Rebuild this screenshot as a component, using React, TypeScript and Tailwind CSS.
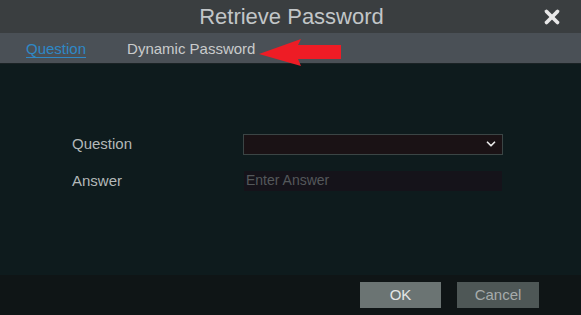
import { X, ChevronDown } from 'lucide-react'

export default function App() {
  return (
    <div
      className="flex h-[315px] w-[581px] flex-col overflow-hidden bg-[#0e1b1d]"
      style={{ fontFamily: '"Liberation Sans", Arial, sans-serif' }}
    >
      <div className="relative flex h-[33px] items-center justify-center bg-[#3a3e40]">
        <span className="pl-[2px] text-[22px] text-[#c2c6c8]">Retrieve Password</span>
        <X className="absolute right-[18px] top-[6px] h-[22px] w-[22px] text-[#e8e8e8]" strokeWidth={4} />
      </div>

      <div className="relative flex h-[31px] items-center gap-[41px] border-b border-[#1a2224] bg-[#4a5056] pl-[26px] pt-[3px] text-[15px]">
        <span className="text-[#2f88c6] underline underline-offset-[3px]">Question</span>
        <span className="text-[#c9cbcc]">Dynamic Password</span>
        <svg className="absolute left-[259px] top-[6px]" width="82" height="27" viewBox="0 0 82 27">
          <path d="M0 15 L42 0 L39 6 L82 6 L82 20 L39 20 L42 27 Z" fill="#ee1c25" />
        </svg>
      </div>

      <div className="flex flex-1 flex-col gap-[14px] pl-[72px] pt-[69px] text-[15px]">
        <div className="flex items-center">
          <span className="w-[171px] text-[#b3b8b8]">Question</span>
          <div className="flex h-[21px] w-[260px] items-center justify-end border border-[#3b4545] bg-[#1a1215] pr-[4px]">
            <ChevronDown className="h-[14px] w-[14px] text-[#e8e8e8]" strokeWidth={3} />
          </div>
        </div>
        <div className="flex items-center">
          <span className="w-[172px] text-[#b3b8b8]">Answer</span>
          <div className="flex h-[20px] w-[258px] items-center bg-[#15131a] pl-[2px] text-[14px] text-[#54585b]">
            Enter Answer
          </div>
        </div>
      </div>

      <div className="flex h-[40px] items-start justify-end gap-[16px] bg-[#0f1516] pr-[42px] pt-[7px] text-[15px]">
        <button className="h-[26px] w-[81px] bg-[#6b7473] text-[#e4e6e6]">OK</button>
        <button className="h-[26px] w-[82px] bg-[#4e5756] text-[#a6abab]">Cancel</button>
      </div>
    </div>
  )
}
